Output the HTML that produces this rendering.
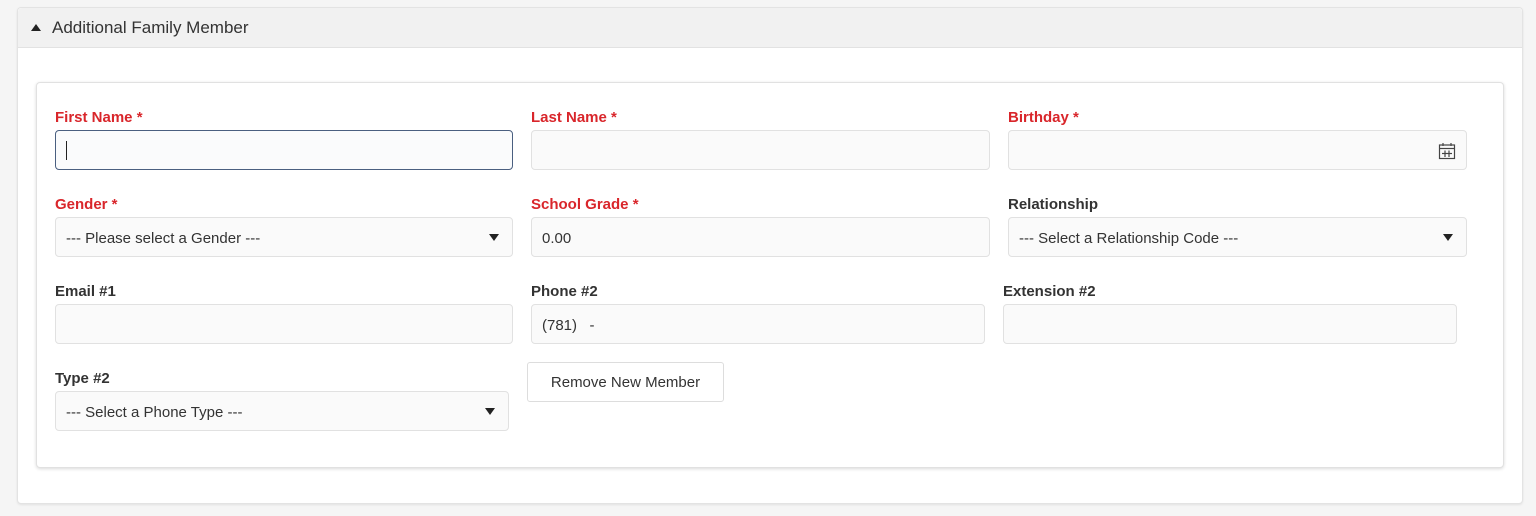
<!DOCTYPE html>
<html><head><meta charset="utf-8"><style>
*{box-sizing:border-box;margin:0;padding:0}
body{width:1536px;height:516px;background:#f5f5f5;font-family:"Liberation Sans",sans-serif;position:relative;overflow:hidden;color:#333}
.panel{position:absolute;left:17px;top:7px;width:1506px;height:497px;background:#fff;border:1px solid #e3e3e3;border-radius:4px;box-shadow:0 1px 2px rgba(0,0,0,.08)}
.hdr{position:absolute;left:0;top:0;right:0;height:40px;background:#f1f1f1;border-bottom:1px solid #e2e2e2;border-radius:4px 4px 0 0}
.hdr span{position:absolute;left:34px;top:10px;font-size:17px;color:#333}
.tri{position:absolute;left:13px;top:16px;width:0;height:0;border-left:5px solid transparent;border-right:5px solid transparent;border-bottom:7px solid #222}
.card{position:absolute;left:36px;top:82px;width:1468px;height:386px;background:#fff;border:1px solid #e1e1e1;border-radius:4px;box-shadow:0 1px 3px rgba(0,0,0,.15)}
.l{position:absolute;font-size:15px;font-weight:bold;color:#333}
.r{color:#d9262b}
.i{position:absolute;height:40px;background:#fafafa;border:1px solid #e1e1e1;border-radius:4px;font-size:15px;color:#333;padding:12px 0 0 10px}
.c{position:absolute;right:13px;top:16px;width:0;height:0;border-left:5px solid transparent;border-right:5px solid transparent;border-top:7px solid #222}
.btn{position:absolute;left:527px;top:362px;width:197px;height:40px;background:#fff;border:1px solid #ddd;border-radius:3px;font-size:15px;color:#333;text-align:center;line-height:40px}
</style></head><body>
<div class="panel"><div class="hdr"><div class="tri"></div><span>Additional Family Member</span></div></div>
<div class="card"></div>
<div class="l r" style="left:55px;top:109px">First Name *</div>
<div class="l r" style="left:531px;top:109px">Last Name *</div>
<div class="l r" style="left:1008px;top:109px">Birthday *</div>
<div class="i" style="left:55px;top:130px;width:458px;border-color:#4a5f80;background:#fafbfc"><div style="position:absolute;left:10px;top:10px;width:1px;height:19px;background:#222"></div></div>
<div class="i" style="left:531px;top:130px;width:459px"></div>
<div class="i" style="left:1008px;top:130px;width:459px">
<svg style="position:absolute;right:10px;top:11px" width="18" height="18" viewBox="0 0 18 18" fill="none" stroke="#444" stroke-width="1.2"><rect x="1.5" y="3" width="15" height="13.5"/><line x1="1.5" y1="6.5" x2="16.5" y2="6.5"/><line x1="5" y1="1" x2="5" y2="4"/><line x1="13" y1="1" x2="13" y2="4"/><line x1="4" y1="11.5" x2="14" y2="11.5"/><line x1="7" y1="8.5" x2="7" y2="15"/><line x1="11" y1="8.5" x2="11" y2="15"/></svg></div>
<div class="l r" style="left:55px;top:196px">Gender *</div>
<div class="l r" style="left:531px;top:196px">School Grade *</div>
<div class="l" style="left:1008px;top:196px">Relationship</div>
<div class="i" style="left:55px;top:217px;width:458px">--- Please select a Gender ---<div class="c"></div></div>
<div class="i" style="left:531px;top:217px;width:459px">0.00</div>
<div class="i" style="left:1008px;top:217px;width:459px">--- Select a Relationship Code ---<div class="c"></div></div>
<div class="l" style="left:55px;top:283px">Email #1</div>
<div class="l" style="left:531px;top:283px">Phone #2</div>
<div class="l" style="left:1003px;top:283px">Extension #2</div>
<div class="i" style="left:55px;top:304px;width:458px"></div>
<div class="i" style="left:531px;top:304px;width:454px">(781)&nbsp;&nbsp;&nbsp;-</div>
<div class="i" style="left:1003px;top:304px;width:454px"></div>
<div class="l" style="left:55px;top:370px">Type #2</div>
<div class="i" style="left:55px;top:391px;width:454px">--- Select a Phone Type ---<div class="c"></div></div>
<div class="btn">Remove New Member</div>
</body></html>
